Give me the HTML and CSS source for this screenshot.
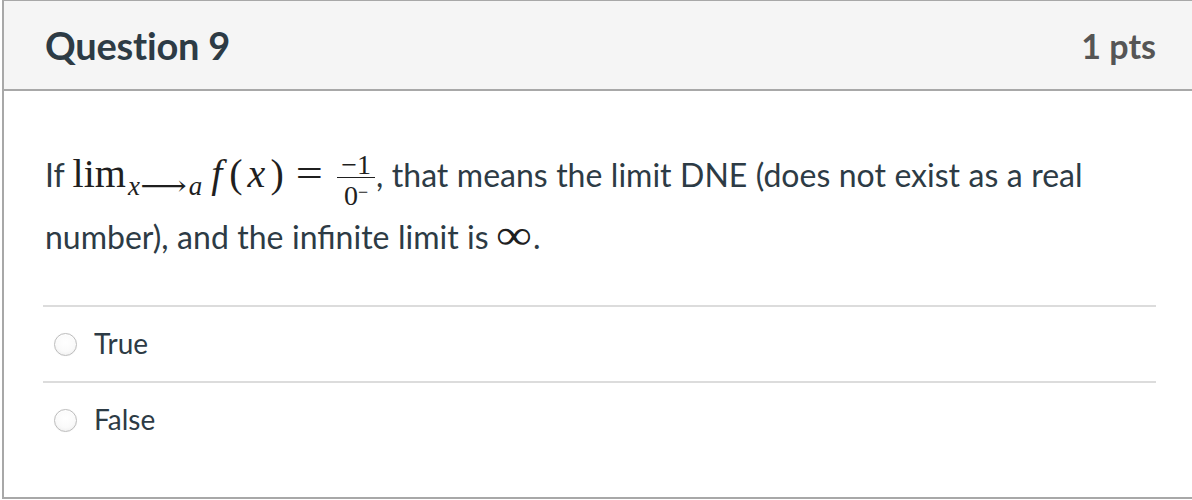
FILE: index.html
```html
<!DOCTYPE html>
<html lang="en">
<head>
<meta charset="utf-8">
<title>Question 9</title>
<link rel="stylesheet" href="styles.css">
</head>
<body>
<div class="question">
  <div class="q-header">
    <h2 class="q-name">Question 9</h2>
    <div class="q-points">1 pts</div>
  </div>
  <div class="q-body">
    <p class="q-text">If <span class="math"><span class="lim">lim</span><span class="sub"><i>x</i><span class="arrow">⟶</span><i>a</i></span><i class="fn">f</i><span class="paren">(</span><i class="var">x</i><span class="paren">)</span><span class="eq">=</span><span class="frac"><span class="num">−1</span><span class="den">0<span class="minus">−</span></span></span></span>, that means the limit DNE (does not exist as a real number), and the infinite limit is <span class="inf">∞</span>.</p>
    <div class="answers">
      <label class="answer"><span class="radio"></span><span class="a-text">True</span></label>
      <label class="answer"><span class="radio"></span><span class="a-text">False</span></label>
    </div>
  </div>
</div>
</body>
</html>
```

FILE: styles.css
```css
html, body {
  margin: 0;
  padding: 0;
  background: #ffffff;
}

body {
  font-family: Lato, "Noto Sans", sans-serif;
  color: #2d3b45;
}

.question {
  box-sizing: border-box;
  width: 1195px;
  height: 500px;
  margin: -1px 0 0 2px;
  border: 2px solid #a8a8a8;
  background: #ffffff;
}

.q-header {
  box-sizing: border-box;
  height: 90px;
  display: flex;
  align-items: center;
  justify-content: space-between;
  padding: 0 39px 0 41px;
  background: #f5f5f5;
  border-bottom: 2px solid #a8a8a8;
}

.q-name {
  margin: 0;
  font-size: 38px;
  font-weight: 700;
  color: #2d3b45;
  letter-spacing: -0.2px;
}

.q-points {
  font-size: 34px;
  font-weight: 700;
  color: #555555;
}

.q-body {
  padding: 0 39px;
}

.q-text {
  margin: 0;
  padding: 54px 2px 39px 2px;
  font-size: 32px;
  line-height: 59px;
  word-spacing: 0.3px;
}

.math {
  font-family: "Liberation Serif", "DejaVu Serif", serif;
  font-size: 40px;
  line-height: 1;
  color: #1f1f1f;
  white-space: nowrap;
  word-spacing: 0;
}

.math i {
  font-style: italic;
}

.sub {
  font-size: 27px;
  vertical-align: -8px;
  margin-left: 2px;
}

.arrow {
  font-style: normal;
  display: inline-block;
  transform: scaleX(1.2);
  margin: 0 6px 0 4px;
}

.fn {
  margin-left: 9px;
  margin-right: 7px;
}

.var {
  margin: 0 5px 0 5px;
}

.eq {
  margin: 0 15px 0 14px;
  display: inline-block;
  transform: scaleX(1.2);
}

.frac {
  display: inline-block;
  vertical-align: -18px;
  text-align: center;
  font-size: 28px;
  line-height: 23px;
  margin: 0 1px 0 2px;
}

.num {
  display: block;
  padding: 0 4px 1px;
  border-bottom: 1.5px solid #1f1f1f;
}

.den {
  display: block;
  padding-top: 3px;
}

.minus {
  font-size: 18px;
  vertical-align: 7px;
}

.inf {
  display: inline-block;
  font-family: "Liberation Serif", "DejaVu Serif", serif;
  font-size: 42px;
  line-height: 0;
  color: #1f1f1f;
  transform: scaleX(1.2);
  margin: 0 4px 0 2px;
}

.answers {
  display: flex;
  flex-direction: column;
}

.answer {
  display: flex;
  align-items: center;
  height: 76px;
  border-top: 2px solid #dcdcdc;
  box-sizing: border-box;
}

.radio {
  box-sizing: border-box;
  width: 23px;
  height: 23px;
  margin: 0 17px 0 11px;
  border-radius: 50%;
  border: 1px solid #bdbdbd;
  background: radial-gradient(circle at 50% 40%, #ffffff 0%, #fafafa 55%, #e9e9e9 100%);
  box-shadow: inset 0 1px 1px rgba(255, 255, 255, 0.9), 0 0 1px rgba(0, 0, 0, 0.08);
}

.a-text {
  font-size: 28px;
  color: #2d3b45;
  padding-bottom: 2px;
}
```
